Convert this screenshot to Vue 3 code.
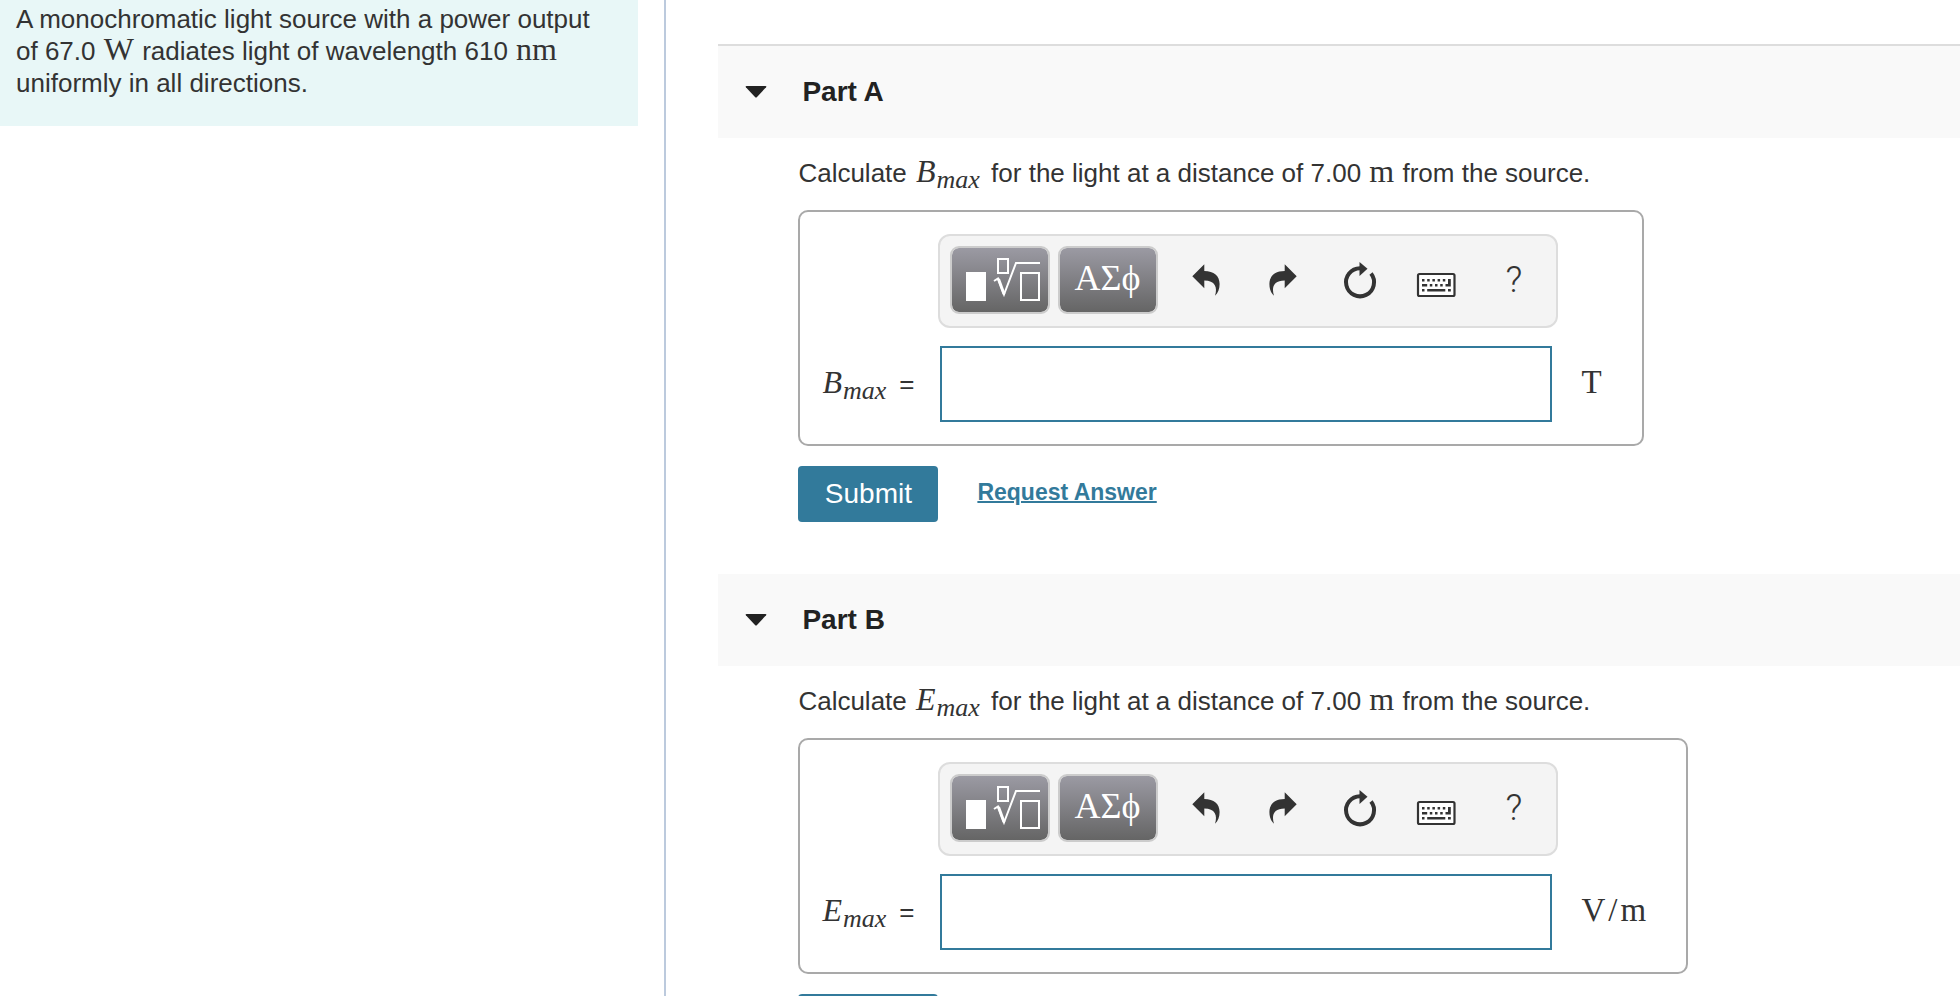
<script setup>
import { ref } from 'vue'

const parts = ref([
  { id: 'a', title: 'Part A', symbol: 'B', unit: ['T'], open: true, answer: '' },
  { id: 'b', title: 'Part B', symbol: 'E', unit: ['V', '/', 'm'], open: true, answer: '' },
])
</script>

<template>
  <div class="page">
    <aside class="side">
      <p class="intro">
        A monochromatic light source with a power output of 67.0 <span class="unit">W</span> radiates
        light of wavelength 610 <span class="unit">nm</span> uniformly in all directions.
      </p>
    </aside>

    <main class="main">
      <section v-for="part in parts" :key="part.id" class="part">
        <h2 class="head">
          <button type="button" class="toggle" :aria-expanded="part.open" @click="part.open = !part.open">
            <svg class="caret" viewBox="0 0 22 12" aria-hidden="true">
              <path d="M1.500 0h19q1.500 0 .6 1.200L12 11q-1 1-2 0L.9 1.200Q0 0 1.500 0z" />
            </svg>
            <span>{{ part.title }}</span>
          </button>
        </h2>

        <div v-if="part.open" class="body">
          <p class="prompt">
            Calculate <span class="math inline">{{ part.symbol }}<sub>max</sub></span> for the light at a
            distance of 7.00 <span class="unit">m</span> from the source.
          </p>

          <div class="answer">
            <div class="toolbar" role="toolbar" aria-label="Math tools">
              <button type="button" class="pad" aria-label="Templates">
                <svg class="template" viewBox="0 0 96 64" aria-hidden="true">
                  <rect x="14" y="24" width="20" height="29" fill="#fff" />
                  <g fill="none" stroke="#fff" stroke-width="2">
                    <rect x="46" y="11" width="10" height="14" />
                    <rect x="69" y="25" width="18" height="27" />
                    <path d="M42 33l4-2.500L52 46.500 64 15h24" />
                    <path d="M46.500 31L52 46" stroke-width="3" />
                  </g>
                </svg>
              </button>
              <button type="button" class="pad greek" aria-label="Symbols">ΑΣϕ</button>
              <div class="tools">
                <button type="button" class="tool" aria-label="Undo">
                  <svg viewBox="0 0 44 44" aria-hidden="true">
                    <path d="M8.300 18.300L20.300 6.300V13C30 13 35.600 18 35.600 26C35.600 31 34 35 31 37.700C33.800 29 31 22.400 20.300 22.400V30.300Z" />
                  </svg>
                </button>
                <button type="button" class="tool" aria-label="Redo">
                  <svg viewBox="0 0 44 44" aria-hidden="true">
                    <path d="M35.700 18.300L23.700 6.300V13C14 13 8.400 18 8.400 26C8.400 31 10 35 13 37.700C10.200 29 13 22.400 23.700 22.400V30.300Z" />
                  </svg>
                </button>
                <button type="button" class="tool" aria-label="Reset">
                  <svg viewBox="0 0 44 44" aria-hidden="true">
                    <path d="M33 15.600A14 14 0 1 1 22 10.300" fill="none" stroke="#333" stroke-width="4" />
                    <path d="M21.500 4L29.500 10.700L21.500 18Z" />
                  </svg>
                </button>
                <button type="button" class="tool" aria-label="Keyboard shortcuts">
                  <svg viewBox="0 0 44 44" aria-hidden="true">
                    <rect x="3" y="16" width="36.500" height="22" rx="1.500" fill="#fff" stroke="#333" stroke-width="2.200" />
                    <path d="M7 21h2.500v2.500H7zM12.200 21h2.500v2.500h-2.500zM17.400 21h2.500v2.500h-2.500zM22.600 21h2.500v2.500h-2.500zM27.800 21h2.500v2.500h-2.500zM33 21h2.800v7.500h-5.300V26H33zM7 26h5.200v2.500H7zM14.800 26h2.500v2.500h-2.500zM20 26h2.500v2.500H20zM25.200 26h2.500v2.500h-2.500zM7 31h2.500v2.500H7zM12.200 31h18.100v2.500H12.200zM33 31h2.800v2.500H33z" />
                  </svg>
                </button>
                <button type="button" class="tool help" aria-label="Help">?</button>
              </div>
            </div>

            <label class="label" :for="'answer-' + part.id">
              <span class="math">{{ part.symbol }}<sub>max</sub></span>
              <span class="equals">=</span>
            </label>
            <input :id="'answer-' + part.id" v-model="part.answer" class="field" type="text" />
            <span class="suffix"><span v-for="term in part.unit" :key="term" class="term">{{ term }}</span></span>
          </div>

          <div class="actions">
            <button type="button" class="submit">Submit</button>
            <a class="request" href="#">Request Answer</a>
          </div>
        </div>
      </section>
    </main>
  </div>
</template>

<style>
body {
  margin: 0;
  background: #fff;
}
</style>

<style scoped>
.page {
  display: grid;
  grid-template-columns: 34% 1fr;
  height: 100vh;
  overflow: hidden;
  color: #333;
  font: 26px/32px "Liberation Sans", Arial, sans-serif;
}
.side {
  padding-right: 26px;
  border-right: 2px solid #bccadd;
}
.intro {
  margin: 0;
  padding: 3px 32px 27px 16px;
  background: #e8f7f7;
}
.unit {
  padding: 0 1px;
  font: 32px/1 "Liberation Serif", "Times New Roman", serif;
  line-height: 0;
}
.main {
  min-width: 0;
  padding: 44px 0 0 52px;
}
.part {
  border-top: 2px solid transparent;
}
.part:first-child {
  border-top-color: #ddd;
}
.head {
  margin: 0;
  background: #f9f9f9;
}
.toggle {
  display: flex;
  align-items: center;
  gap: 35px;
  width: 100%;
  height: 92px;
  padding: 0 27px;
  border: 0;
  background: none;
  color: #222;
  font: bold 28px/32px "Liberation Sans", Arial, sans-serif;
  text-align: left;
}
.caret {
  width: 22px;
  height: 12px;
  fill: #222;
}
.body {
  padding: 0 20px 50px 80px;
}
.prompt {
  margin: 0;
  padding: 19px 0 21px;
}
.math {
  font-family: "Liberation Serif", "Times New Roman", serif;
  font-size: 32px;
  font-style: italic;
  line-height: 0;
}
.math sub {
  padding-left: 1px;
  font-size: 26px;
  line-height: 0;
  vertical-align: -6px;
}
.inline {
  padding: 0 4px 0 2px;
}
.answer {
  display: grid;
  grid-template-columns: 116px 620px auto;
  align-items: center;
  row-gap: 18px;
  box-sizing: border-box;
  width: fit-content;
  padding: 22px 40px 22px 22px;
  border: 2px solid #a9a9a9;
  border-radius: 10px;
}
.toolbar {
  display: flex;
  grid-column: 2;
  gap: 8px;
  padding: 10px 4px 12px 10px;
  border: 2px solid #ddd;
  border-radius: 12px;
  background: #f4f4f4;
}
.pad {
  box-sizing: border-box;
  width: 100px;
  height: 68px;
  padding: 0;
  border: 2px solid #ccc;
  border-radius: 9px;
  background: linear-gradient(#9b9aa3, #656565) padding-box;
  color: #fff;
}
.template {
  display: block;
  width: 96px;
  height: 64px;
}
.greek {
  padding: 0 2px 4px 0;
  font: 36px/40px "Liberation Serif", "Times New Roman", serif;
}
.tools {
  display: flex;
  flex: 1;
  padding-left: 1px;
}
.tool {
  display: flex;
  flex: 1;
  align-items: center;
  justify-content: center;
  padding: 0;
  border: 0;
  background: none;
  color: #333;
}
.tool svg {
  width: 44px;
  height: 44px;
  fill: #333;
}
.help {
  font: 300 37px/44px Roboto, sans-serif;
}
.label {
  display: flex;
  grid-column: 1;
  align-items: baseline;
  justify-content: space-between;
  padding-right: 24px;
}
.equals {
  font-size: 26px;
}
.field {
  box-sizing: border-box;
  width: 612px;
  height: 76px;
  margin: 0 0 0 2px;
  padding: 0 16px;
  border: 2px solid #327a9b;
  background: #fff;
  color: #333;
  font: 26px/32px "Liberation Sans", Arial, sans-serif;
}
.suffix {
  padding: 0 0 4px 23px;
  font: 33px/36px "Liberation Serif", "Times New Roman", serif;
}
.term:nth-child(2) {
  padding: 0 3px;
}
.actions {
  display: flex;
  align-items: center;
  gap: 39px;
  padding-top: 20px;
}
.submit {
  width: 140px;
  height: 56px;
  padding: 0;
  border: 0;
  border-radius: 4px;
  background: #327a9b;
  color: #fff;
  font: 28px/32px "Liberation Sans", Arial, sans-serif;
}
.request {
  padding-bottom: 4px;
  color: #327a9b;
  font-size: 23px;
  font-weight: bold;
  text-decoration: underline;
  text-decoration-thickness: 2px;
}
</style>
